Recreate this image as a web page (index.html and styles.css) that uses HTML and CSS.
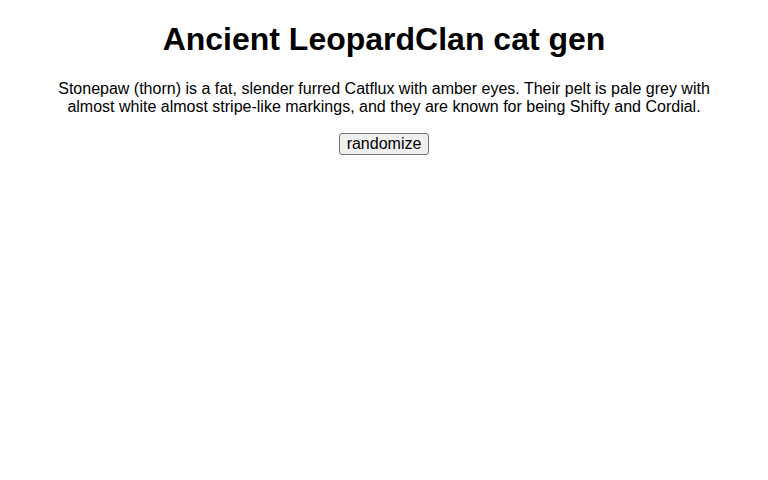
FILE: index.html
```html
<!DOCTYPE html>
<html>
<head>
  <meta charset="UTF-8">
  <title>Ancient LeopardClan cat gen</title>
  <link rel="stylesheet" href="styles.css">
</head>
<body>

  <h1>Ancient LeopardClan cat gen</h1>

  <p id="catText">Stonepaw (thorn) is a fat, slender furred Catflux with amber eyes. Their pelt is pale grey with almost white almost stripe-like markings, and they are known for being Shifty and Cordial.</p>

  <button class="btn" id="randomBtn">randomize</button>

</body>
</html>
```

FILE: styles.css
```css
body {
  font-family: "Liberation Sans", Arial, sans-serif;
  text-align: center;
  color: #000;
  background: #fff;
  margin: 0;
  padding: 0 50px;
}
h1 {
  font-size: 32px;
  margin: 21px 0 22px;
}
p {
  margin: 16px 0 17px;
}
.btn {
  font-family: "Liberation Sans", Arial, sans-serif;
  font-size: 16px;
  padding: 1px 7px;
  background: #efefef;
  border: 1px solid #767676;
  border-radius: 3px;
  color: #000;
}
```
